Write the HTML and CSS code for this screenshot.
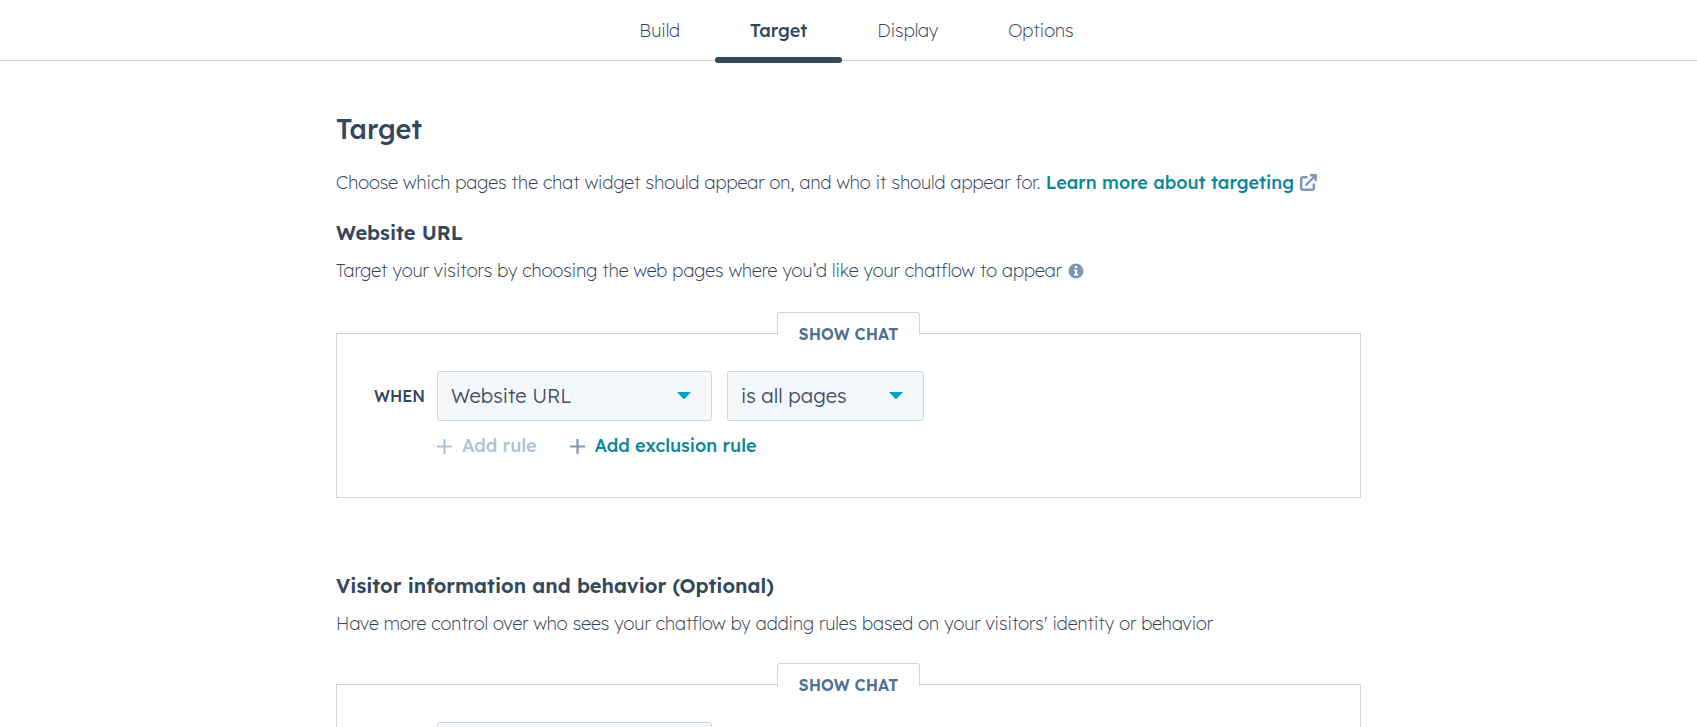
FILE: index.html
```html
<!DOCTYPE html>
<html lang="en">
<head>
    <meta charset="UTF-8">
    <meta name="viewport" content="width=device-width, initial-scale=1.0">
    <title>Target</title>
    <link rel="stylesheet" href="styles.css">
</head>
<body>

    <nav class="tabs">
        <a class="tab" href="#build">Build</a>
        <a class="tab active" href="#target" aria-current="page">Target</a>
        <a class="tab" href="#display">Display</a>
        <a class="tab" href="#options">Options</a>
    </nav>

    <main class="content">
        <h1>Target</h1>
        <p class="intro">Choose which pages the chat widget should appear on, and who it should appear for.
            <a class="learn-more" href="#learn">Learn more about targeting<svg class="icon-external" viewBox="0 0 17 17" aria-hidden="true"><path d="M7.500 3.200H3Q1.200 3.200 1.200 5V14Q1.200 15.800 3 15.800H12Q13.800 15.800 13.800 14V9.500M5.500 11.500L15 2M10 1.300H15.700V7"/></svg></a>
        </p>

        <section class="rules">
            <h2>Website URL</h2>
            <p>Target your visitors by choosing the web pages where you’d like your chatflow to appear<svg class="icon-info" viewBox="0 0 16 16" aria-hidden="true"><circle cx="8" cy="8" r="7.500"/><path d="M6.800 3H9.200V5H6.800ZM6 6.500H9.200V11H10.200V12.500H6V11H7V8H6Z"/></svg></p>

            <div class="card">
                <div class="card-tab">SHOW CHAT</div>
                <div class="rule-grid">
                    <label class="when" for="property">WHEN</label>
                    <div class="fields">
                        <div class="select select-property">
                            <select id="property">
                                <option>Website URL</option>
                            </select>
                            <svg viewBox="0 0 14 7" aria-hidden="true"><path d="M0 0H14L8 6.500Q7 7.300 6 6.500Z"/></svg>
                        </div>
                        <div class="select select-operator">
                            <select aria-label="Operator">
                                <option>is all pages</option>
                            </select>
                            <svg viewBox="0 0 14 7" aria-hidden="true"><path d="M0 0H14L8 6.500Q7 7.300 6 6.500Z"/></svg>
                        </div>
                    </div>
                    <div class="actions">
                        <button type="button" disabled><svg viewBox="0 0 14 14" aria-hidden="true"><path d="M7 0V14M0 7H14"/></svg>Add rule</button>
                        <button type="button"><svg viewBox="0 0 14 14" aria-hidden="true"><path d="M7 0V14M0 7H14"/></svg>Add exclusion rule</button>
                    </div>
                </div>
            </div>
        </section>

        <section class="rules">
            <h2>Visitor information and behavior (Optional)</h2>
            <p>Have more control over who sees your chatflow by adding rules based on your visitors' identity or behavior</p>

            <div class="card">
                <div class="card-tab">SHOW CHAT</div>
                <div class="rule-grid">
                    <div class="fields">
                        <div class="select select-property">
                            <select aria-label="Visitor property"></select>
                        </div>
                    </div>
                </div>
            </div>
        </section>
    </main>

</body>
</html>
```
FILE: styles.css
```css
:root {
    --text: #33475b;
    --text-soft: #33405a;
    --link: #0b8599;
    --teal: #00a4bd;
    --icon: #7c98b6;
    --border: #cfd3dc;
    --field-text: #465166;
    --field-border: #cbd6e2;
    --field-bg: #f5f8fa;
}

* {
    box-sizing: border-box;
}

body {
    margin: 0;
    background: #fff;
    color: var(--text-soft);
    font-family: Lexend, Inter, "Open Sans", sans-serif;
    font-size: 18px;
    font-weight: 200;
    line-height: 24px;
}

/* tabs */
.tabs {
    display: flex;
    justify-content: center;
    height: 61px;
    padding-left: 16px;
    border-bottom: 1px solid var(--border);
}

.tab {
    position: relative;
    padding: 19px 35px 0;
    color: var(--text-soft);
    text-decoration: none;
}

.tab.active {
    color: var(--text);
    font-weight: 500;
}

.tab.active::after {
    content: "";
    position: absolute;
    left: 0;
    right: 0;
    bottom: -3px;
    height: 6px;
    border-radius: 3px;
    background: var(--text);
}

/* content */
.content {
    max-width: 1025px;
    margin: 0 auto;
    padding: 50px 0 72px;
}

h1,
h2,
p {
    margin: 0;
}

h1 {
    margin-bottom: 24px;
    color: var(--text);
    font-size: 27px;
    font-weight: 500;
    line-height: 36px;
}

h2 {
    margin-bottom: 12px;
    color: var(--text);
    font-size: 20px;
    font-weight: 600;
    line-height: 28px;
}

.intro {
    margin-bottom: 24px;
}

.learn-more {
    color: var(--link);
    font-weight: 500;
    text-decoration: none;
}

.icon-external {
    width: 17px;
    height: 17px;
    margin-left: 6px;
    vertical-align: -2px;
    fill: none;
    stroke: var(--icon);
    stroke-width: 2.4;
}

.icon-info {
    width: 16px;
    height: 16px;
    margin: 0 0 6px 6px;
    vertical-align: -8px;
    fill: var(--icon);
}

.icon-info path {
    fill: #fff;
}

.rules {
    margin-bottom: 74px;
}

/* rule card */
.card {
    position: relative;
    margin-top: 48px;
    padding: 37px 36px 39px;
    border: 1px solid var(--border);
}

.card-tab {
    position: absolute;
    top: -22px;
    left: 0;
    right: 0;
    width: 143px;
    height: 23px;
    margin: 0 auto;
    padding-top: 9px;
    border: 1px solid var(--border);
    border-bottom: 0;
    border-radius: 3px 3px 0 0;
    background: #fff;
    color: #516f90;
    font-size: 16px;
    font-weight: 600;
    text-align: center;
}

.rule-grid {
    display: grid;
    grid-template-columns: 52px 1fr;
    gap: 13px 12px;
    align-items: center;
}

.when {
    color: var(--text);
    font-size: 16px;
    font-weight: 500;
    text-align: right;
}

.fields {
    grid-column: 2;
    display: flex;
    gap: 15px;
}

.select {
    position: relative;
}

.select-property {
    width: 275px;
}

.select-operator {
    width: 197px;
}

.select select {
    width: 100%;
    height: 50px;
    padding: 0 44px 0 13px;
    appearance: none;
    border: 1px solid var(--field-border);
    border-radius: 3px;
    background: var(--field-bg);
    color: var(--field-text);
    font: inherit;
    font-size: 20px;
    font-weight: 300;
}

.select svg {
    position: absolute;
    top: 21px;
    right: 21px;
    width: 14px;
    height: 7px;
    fill: var(--teal);
    pointer-events: none;
}

.actions {
    grid-column: 2;
    display: flex;
    gap: 33px;
}

.actions button {
    display: flex;
    align-items: center;
    gap: 10px;
    padding: 0;
    border: 0;
    background: none;
    color: var(--link);
    font: inherit;
    font-weight: 500;
    cursor: pointer;
}

.actions button:disabled {
    color: #b0c1d4;
    cursor: default;
}

.actions svg {
    width: 15px;
    height: 15px;
    stroke: var(--icon);
    stroke-width: 2;
}

.actions button:disabled svg {
    stroke: #b0c1d4;
}
```
